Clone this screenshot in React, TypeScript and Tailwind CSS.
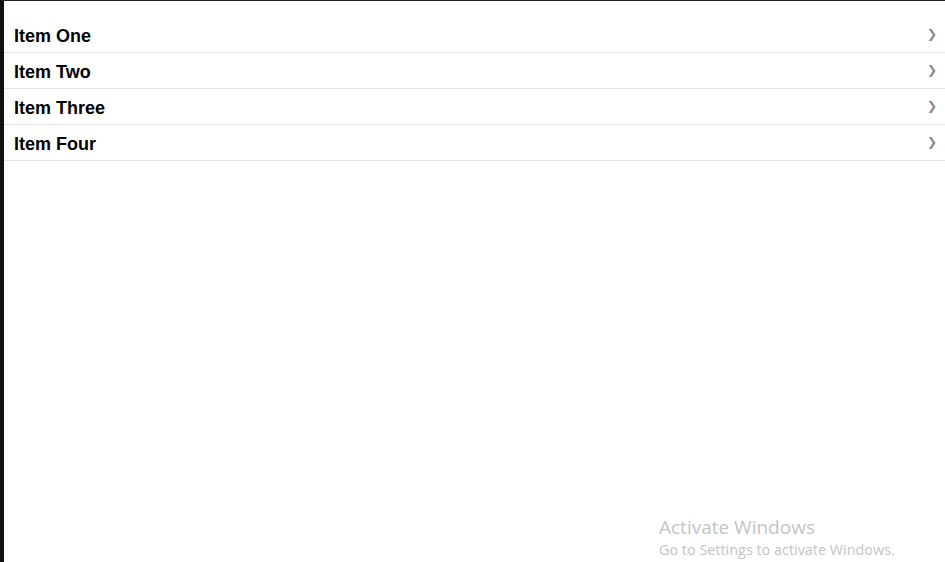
const items = ['Item One', 'Item Two', 'Item Three', 'Item Four']

export default function App() {
    return (
        <main className="relative h-[562px] w-[945px] overflow-hidden bg-white border-t border-[#222] border-l-[4px] border-l-[#111] font-['Liberation_Sans',Arial,sans-serif]">
            <ul className="pt-[16px]">
                {items.map((item) => (
                    <li key={item} className="flex h-[36px] items-center justify-between border-b border-[#e3e3e3] pl-[10px] pr-[8px]">
                        <span className="mt-[4px] text-[18px] font-bold text-black">{item}</span>
                        <span className="mb-[1px] text-[12px] text-[#888]">❯</span>
                    </li>
                ))}
            </ul>
            <div className="absolute left-[655px] top-[513px] font-['Open_Sans',sans-serif] text-[#c4c4c4]">
                <p className="text-[19px] leading-[26px]">Activate Windows</p>
                <p className="text-[14.4px] leading-[19px]">Go to Settings to activate Windows.</p>
            </div>
        </main>
    )
}
